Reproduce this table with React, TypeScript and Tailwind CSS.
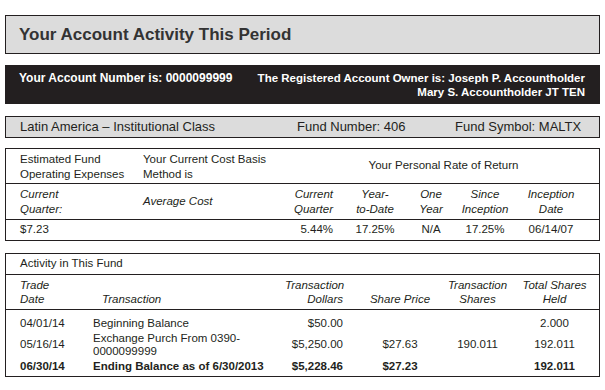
const font = { fontFamily: '"Liberation Sans", Arial, sans-serif' };

function FundTable() {
  return (
    <div className="mt-[10px] border border-[#231f20] text-[11.5px] text-[#231f20]">
      <div className="grid grid-cols-[132px_144px_63px_60px_52px_56px_1fr] h-[35px] border-b border-[#231f20]">
        <div className="pl-[14px] pt-[3px] leading-[15px]">
          Estimated Fund
          <br />
          Operating Expenses
        </div>
        <div className="pl-[5px] pt-[3px] leading-[15px]">
          Your Current Cost Basis
          <br />
          Method is
        </div>
        <div className="col-span-5 flex items-center justify-center pl-[6px]">Your Personal Rate of Return</div>
      </div>
      <div className="grid grid-cols-[132px_144px_63px_60px_52px_56px_1fr] h-[36px] items-center border-b border-[#231f20] italic leading-[15px]">
        <div className="pl-[14px]">
          Current
          <br />
          Quarter:
        </div>
        <div className="pl-[5px]">Average Cost</div>
        <div className="text-right pr-[12px]">
          Current
          <br />
          Quarter
        </div>
        <div className="text-center">
          Year-
          <br />
          to-Date
        </div>
        <div className="text-center">
          One
          <br />
          Year
        </div>
        <div className="text-center">
          Since
          <br />
          Inception
        </div>
        <div className="text-center pr-[10px]">
          Inception
          <br />
          Date
        </div>
      </div>
      <div className="grid grid-cols-[132px_144px_63px_60px_52px_56px_1fr] h-[20px] items-center">
        <div className="pl-[14px]">$7.23</div>
        <div />
        <div className="text-right pr-[12px]">5.44%</div>
        <div className="text-center">17.25%</div>
        <div className="text-center">N/A</div>
        <div className="text-center">17.25%</div>
        <div className="text-center pr-[10px]">06/14/07</div>
      </div>
    </div>
  );
}

const rows = [
  { date: '04/01/14', tx: ['Beginning Balance'], dollars: '$50.00', price: '', shares: '', total: '2.000', h: 'h-[18px]', bold: false },
  { date: '05/16/14', tx: ['Exchange Purch From 0390-', '0000099999'], dollars: '$5,250.00', price: '$27.63', shares: '190.011', total: '192.011', h: 'h-[24px]', bold: false },
  { date: '06/30/14', tx: ['Ending Balance as of 6/30/2013'], dollars: '$5,228.46', price: '$27.23', shares: '', total: '192.011', h: 'h-[20px]', bold: true },
];

function ActivityTable() {
  const cols = 'grid grid-cols-[82px_197px_70px_90px_65px_1fr]';
  return (
    <div className="mt-[12px] border border-[#231f20] text-[11.5px] text-[#231f20]">
      <div className="h-[21px] flex items-center pl-[14px] border-b border-[#231f20]">Activity in This Fund</div>
      <div className={`${cols} h-[35px] items-center border-b border-[#231f20] italic leading-[14px]`}>
        <div className="pl-[14px]">
          Trade
          <br />
          Date
        </div>
        <div className="pl-[14px] self-end pb-[3px]">Transaction</div>
        <div className="text-right pr-[12px]">
          Transaction
          <br />
          Dollars
        </div>
        <div className="text-center self-end pb-[3px]">Share Price</div>
        <div className="text-center">
          Transaction
          <br />
          Shares
        </div>
        <div className="text-center">
          Total Shares
          <br />
          Held
        </div>
      </div>
      <div className="pt-[4px]">
        {rows.map((r) => (
          <div key={r.date} className={`${cols} ${r.h} items-center leading-[12.5px] ${r.bold ? 'font-semibold' : ''}`}>
            <div className="pl-[14px]">{r.date}</div>
            <div className="pl-[5px]">
              {r.tx.map((t) => (
                <div key={t}>{t}</div>
              ))}
            </div>
            <div className="text-right pr-[12px]">{r.dollars}</div>
            <div className="text-center">{r.price}</div>
            <div className="text-center">{r.shares}</div>
            <div className="text-center">{r.total}</div>
          </div>
        ))}
      </div>
    </div>
  );
}

export default function App() {
  return (
    <div className="w-[605px] h-[390px] bg-white px-[5px] pt-[15px]" style={font}>
      <div className="h-[39px] bg-[#dcdcdc] border border-[#231f20] flex items-center pl-[13px]">
        <h1 className="text-[17px] font-bold text-[#333]">Your Account Activity This Period</h1>
      </div>
      <div className="mt-[11px] h-[39px] bg-[#231f20] text-white font-bold leading-[14px] flex justify-between pl-[14px] pr-[15px] pt-[6px]">
        <div className="text-[12px]">Your Account Number is: 0000099999</div>
        <div className="text-right text-[11.5px]">
          The Registered Account Owner is: Joseph P. Accountholder
          <br />
          Mary S. Accountholder JT TEN
        </div>
      </div>
      <div className="mt-[12px] h-[22px] bg-[#dcdcdc] border border-[#231f20] flex items-center text-[13px] text-[#231f20]">
        <div className="w-[291px] pl-[14px]">Latin America – Institutional Class</div>
        <div className="w-[158px]">Fund Number: 406</div>
        <div>Fund Symbol: MALTX</div>
      </div>
      <FundTable />
      <ActivityTable />
    </div>
  );
}
